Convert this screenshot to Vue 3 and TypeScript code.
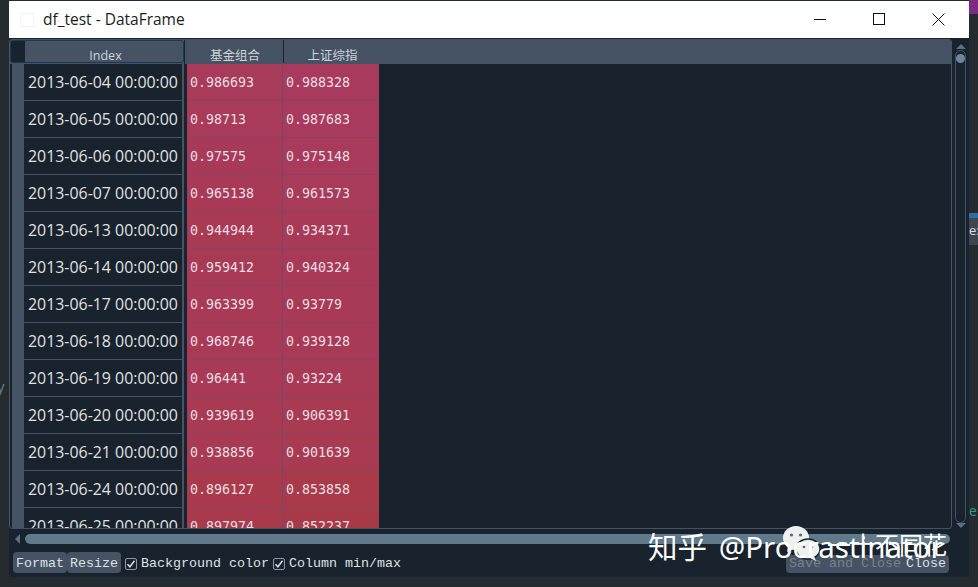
<script setup lang="ts">
interface Row { date: string; a: string; b: string; colorA: string; colorB: string }
const raw: [string, string, string, string, string][] = [
  ['2013-06-04 00:00:00', '0.986693', '0.988328', '#a83a5a', '#a83a5e'],
  ['2013-06-05 00:00:00', '0.98713', '0.987683', '#a83a5a', '#a83a5d'],
  ['2013-06-06 00:00:00', '0.97575', '0.975148', '#a83a59', '#a83a5c'],
  ['2013-06-07 00:00:00', '0.965138', '0.961573', '#a83a57', '#a83a5a'],
  ['2013-06-13 00:00:00', '0.944944', '0.934371', '#a83a54', '#a83a57'],
  ['2013-06-14 00:00:00', '0.959412', '0.940324', '#a83a56', '#a83a58'],
  ['2013-06-17 00:00:00', '0.963399', '0.93779', '#a83a57', '#a83a57'],
  ['2013-06-18 00:00:00', '0.968746', '0.939128', '#a83a57', '#a83a57'],
  ['2013-06-19 00:00:00', '0.96441', '0.93224', '#a83a57', '#a83a56'],
  ['2013-06-20 00:00:00', '0.939619', '0.906391', '#a83a53', '#a83a52'],
  ['2013-06-21 00:00:00', '0.938856', '0.901639', '#a83a53', '#a83a51'],
  ['2013-06-24 00:00:00', '0.896127', '0.853858', '#a83a4c', '#a83a4a'],
  ['2013-06-25 00:00:00', '0.897974', '0.852237', '#a83a4c', '#a83a48'],
]
const rows: Row[] = raw.map(([date, a, b, colorA, colorB]) => ({ date, a, b, colorA, colorB }))
</script>

<template>
  <div class="page">
    <div class="strip-left"><span class="frag-y">y</span></div>
    <div class="window">
      <div class="titlebar">
        <svg class="app-icon" width="14" height="14" viewBox="0 0 14 14"><rect x="0.5" y="0.5" width="13" height="13" fill="none" stroke="#f3f3f3"/></svg>
        <span class="title">df_test - DataFrame</span>
        <div class="controls">
          <svg width="59" height="37" viewBox="0 0 59 37"><path d="M23 18.500h12" stroke="#111" fill="none"/></svg>
          <svg width="59" height="37" viewBox="0 0 59 37"><rect x="23.500" y="12.500" width="11" height="11" stroke="#111" fill="none"/></svg>
          <svg width="59" height="37" viewBox="0 0 59 37"><path d="M23.500 12.500l12 12M35.500 12.500l-12 12" stroke="#111" fill="none"/></svg>
        </div>
      </div>
      <div class="content">
        <div class="table-area">
          <div class="table-frame">
            <div class="head">
              <div class="head-left">
                <div class="corner"></div>
                <div class="head-cell index-head">Index</div>
              </div>
              <div class="head-right">
                <div class="head-cell col">基金组合</div>
                <div class="head-cell col">上证综指</div>
              </div>
            </div>
            <div class="body">
              <div class="index-col">
                <div v-for="r in rows" :key="r.date" class="index-row">
                  <div class="row-tab"></div>
                  <div class="date">{{ r.date }}</div>
                </div>
              </div>
              <div class="data-wrap">
                <div v-for="r in rows" :key="r.date + 'd'" class="data-row">
                  <div class="cell" :style="{ backgroundColor: r.colorA }">{{ r.a }}</div>
                  <div class="cell" :style="{ backgroundColor: r.colorB }">{{ r.b }}</div>
                </div>
              </div>
            </div>
          </div>
          <div class="vscroll">
            <div class="arrow-up"></div>
            <div class="v-track"><div class="v-thumb"></div></div>
            <div class="arrow-down"></div>
          </div>
        </div>
        <div class="hscroll">
          <div class="arrow-left"></div>
          <div class="h-thumb"></div>
        </div>
        <div class="footer">
          <button class="btn">Format</button>
          <button class="btn">Resize</button>
          <label class="check"><span class="box"><svg width="10" height="10" viewBox="0 0 10 10"><path d="M1.500 5.200l2.400 2.600 4.600-6" stroke="#e0e1e3" stroke-width="1.400" fill="none"/></svg></span>Background color</label>
          <label class="check"><span class="box"><svg width="10" height="10" viewBox="0 0 10 10"><path d="M1.500 5.200l2.400 2.600 4.600-6" stroke="#e0e1e3" stroke-width="1.400" fill="none"/></svg></span>Column min/max</label>
          <div class="spacer"></div>
          <button class="btn btn-off">Save and Close</button>
          <button class="btn btn-close">Close</button>
        </div>
      </div>
      <div class="window-foot"></div>
    </div>
    <div class="strip-right">
      <div class="purple"></div>
      <div class="frag-tab"><span>e:</span></div>
      <span class="frag-teal">e</span>
    </div>
    <div class="watermark">
      <svg class="wechat" width="42" height="38" viewBox="0 0 42 38">
        <ellipse cx="14" cy="13" rx="13" ry="12" fill="#eef0f0"/>
        <path d="M6 21l-1 6 7-3z" fill="#eef0f0"/>
        <circle cx="9.500" cy="10" r="1.600" fill="#5b6770"/>
        <circle cx="18.500" cy="10" r="1.600" fill="#5b6770"/>
        <ellipse cx="26" cy="24" rx="12" ry="10" fill="#eef0f0" stroke="#1c2630" stroke-width="1.500"/>
        <path d="M32 31l2 5-6-3z" fill="#eef0f0"/>
        <circle cx="22" cy="22" r="1.300" fill="#5b6770"/>
        <circle cx="30" cy="22" r="1.300" fill="#5b6770"/>
      </svg>
      <span class="wm-text">知乎 @Procrastinator</span>
      <span class="wm-name">一十不同花</span>
    </div>
  </div>
</template>

<style>
html, body { margin: 0; background: #262b2f; overflow: hidden; }
</style>

<style scoped>
.page {
  position: relative;
  width: 978px;
  height: 587px;
  display: flex;
  overflow: hidden;
  background: #262b2f;
  font-family: "Open Sans", "Noto Sans", sans-serif;
}
.strip-left { width: 9px; flex: none; display: flex; align-items: flex-start; padding-top: 376px; box-sizing: border-box; overflow: hidden; }
.frag-y { color: #5f7f94; font-size: 15px; margin-left: -3px; }
.window { width: 960px; flex: none; display: flex; flex-direction: column; padding-top: 1px; box-sizing: border-box; }
.titlebar { height: 37px; flex: none; background: #fff; display: flex; align-items: center; box-sizing: border-box; }
.app-icon { margin: 0 9px 0 11px; flex: none; }
.title { font-size: 15.500px; color: #1c1c1c; padding-bottom: 2px; }
.controls { margin-left: auto; display: flex; margin-right: 1px; }
.content { flex: none; height: 539px; background: #19232d; box-sizing: border-box; display: flex; flex-direction: column; }
.table-area { height: 491px; flex: none; display: flex; padding-top: 1px; box-sizing: border-box; }
.table-frame {
  width: 943px;
  height: 490px;
  flex: none;
  border: 1px solid #455364;
  border-radius: 3px;
  box-sizing: border-box;
  display: flex;
  flex-direction: column;
  overflow: hidden;
}
.head { height: 24px; flex: none; display: flex; background: #455364; }
.head-left { width: 174px; flex: none; display: flex; border: 1px solid #1a3a55; border-radius: 3px; box-sizing: border-box; height: 23px; }
.corner { width: 14px; background: #19232d; flex: none; }
.head-cell { color: #d0d4d9; font-size: 12.500px; line-height: 30px; height: 23px; overflow: hidden; text-align: center; box-sizing: border-box; }
.index-head { flex: 1; padding-left: 3px; }
.head-right { display: flex; flex: 1; padding-left: 2px; border-left: 1px solid #19232d; }
.col { width: 97px; border-right: 1px solid #19232d; font-family: "Noto Sans CJK SC", sans-serif; }
.col:last-child { border-right: 0; }
.body { flex: 1; display: flex; min-height: 0; overflow: hidden; }
.index-col { width: 174px; flex: none; border-right: 2px solid #455364; box-sizing: border-box; padding-left: 2px; }
.index-row { height: 37px; display: flex; border-bottom: 1px solid #455364; box-sizing: border-box; }
.row-tab { width: 12px; flex: none; background: #455364; }
.date { color: #e0e1e3; font-size: 15.900px; line-height: 36px; padding-left: 4px; white-space: nowrap; }
.data-wrap { margin-left: 3px; }
.data-row { height: 37px; display: flex; }
.cell {
  width: 96px;
  height: 37px;
  box-sizing: border-box;
  border-right: 1px solid #6f4a6b;
  border-bottom: 1px solid #8e4260;
  color: #ecdfe2;
  font-family: "DejaVu Sans Mono", monospace;
  font-size: 13.300px;
  line-height: 37px;
  padding-left: 3px;
}
.cell:last-child { border-right: 0; }
.vscroll { flex: 1; display: flex; flex-direction: column; align-items: center; position: relative; }
.arrow-up { width: 0; height: 0; border: 5px solid transparent; border-top: 0; border-bottom: 5px solid #5d6e7d; margin-top: 5px; }
.v-track { flex: 1; width: 11px; border: 1px solid #455364; border-radius: 6px; box-sizing: border-box; margin-top: 1px; display: flex; justify-content: center; padding-top: 3px; }
.v-thumb { width: 9px; height: 9px; border-radius: 5px; background: #6b879e; }
.arrow-down { width: 0; height: 0; border: 5px solid transparent; border-bottom: 0; border-top: 5px solid #5d6e7d; margin-bottom: 1px; }
.hscroll { height: 16px; flex: none; display: flex; align-items: center; padding-left: 6px; margin-top: 2px; }
.arrow-left { width: 0; height: 0; border: 5px solid transparent; border-left: 0; border-right: 5px solid #5d6e7d; margin-right: 5px; }
.h-thumb { width: 925px; height: 10px; border-radius: 5px; background: #60798b; }
.footer { flex: 1; display: flex; align-items: flex-start; padding: 5px 20px 0 4px; }
.btn {
  height: 21px;
  border: 0;
  padding: 0 3px;
  margin: 0;
  background: #455364;
  border-radius: 4px;
  color: #dfe1e3;
  font-family: "Liberation Mono", monospace;
  font-size: 13.330px;
  line-height: 23px;
}
.btn-off { color: #77828e; height: 18px; margin-top: 3px; line-height: 18px; border-radius: 4px 0 0 4px; padding-right: 2px; }
.btn-close { height: 18px; margin-top: 3px; line-height: 18px; padding-left: 3px; border-radius: 0 4px 4px 0; }
.check {
  display: flex;
  align-items: center;
  height: 23px;
  color: #dfe1e3;
  font-family: "Liberation Mono", monospace;
  font-size: 13.330px;
  margin-left: 4px;
}
.box { width: 12px; height: 12px; border: 1px solid #8b98a5; border-radius: 2px; margin-right: 4px; display: flex; align-items: center; justify-content: center; box-sizing: border-box; }
.spacer { flex: 1; }
.window-foot { flex: 1; background: #262b2f; }
.strip-right { flex: 1; position: relative; min-width: 0; overflow: hidden; display: flex; flex-direction: column; }
.purple { height: 14px; background: #7b2b82; flex: none; }
.frag-tab { margin-top: 199px; height: 32px; background: #3e4650; border-top: 5px solid #2a6ea8; box-sizing: border-box; color: #d8dce0; font-size: 13px; line-height: 24px; }
.frag-teal { color: #2a9d8f; font-size: 14px; margin-top: 256px; }
.watermark { position: absolute; left: 648px; top: 525px; display: flex; align-items: center; height: 40px; color: #fff; white-space: nowrap; }
.wm-text { position: relative; font-size: 29.500px; word-spacing: 4px; font-family: "Noto Sans", "Noto Sans CJK SC", sans-serif; }
.wechat { position: absolute; left: 134px; top: 0; }
.wm-name { position: absolute; left: 179px; top: 1px; font-size: 24px; font-family: "Noto Sans CJK SC", sans-serif; }
</style>
